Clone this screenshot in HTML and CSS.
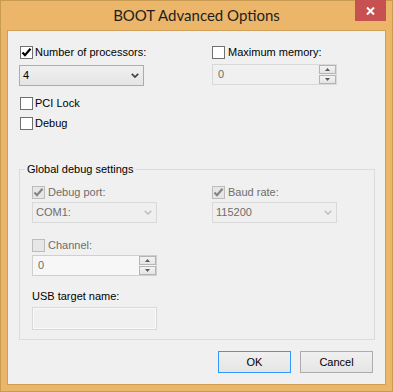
FILE: index.html
```html
<!DOCTYPE html>
<html lang="en">
<head>
    <meta charset="UTF-8">
    <meta name="viewport" content="width=device-width, initial-scale=1.0">
    <title>BOOT Advanced Options</title>
    <link rel="stylesheet" href="styles.css">
</head>
<body>
    <div class="window">
        <div class="titlebar">
            <span class="title">BOOT Advanced Options</span>
            <div class="close-btn">
                <svg width="9" height="8" viewBox="0 0 9 8"><path d="M1 0.5 L8 7.5 M8 0.5 L1 7.5" stroke="#fff" stroke-width="2" fill="none"/></svg>
            </div>
        </div>

        <div class="client">
            <div class="options">
                <div class="col">
                    <label class="check indent">
                        <span class="box"><svg width="11" height="11" viewBox="0 0 11 11"><path d="M1.5 5.5 L4 8.2 L9.5 1.8" stroke="#000" stroke-width="2.2" fill="none"/></svg></span>
                        Number of processors:
                    </label>
                    <div class="combo">
                        <span>4</span>
                        <svg width="8" height="5" viewBox="0 0 8 5"><path d="M0.8 0.8 L4 4 L7.2 0.8" stroke="#404040" stroke-width="1.7" fill="none"/></svg>
                    </div>
                    <label class="check indent gap-lg"><span class="box"></span>PCI Lock</label>
                    <label class="check indent gap-sm"><span class="box"></span>Debug</label>
                </div>
                <div class="col">
                    <label class="check"><span class="box"></span>Maximum memory:</label>
                    <div class="spinner disabled spin-top">
                        <span class="value">0</span>
                        <div class="spin-btns">
                            <span class="spin-btn"><svg width="5" height="3" viewBox="0 0 5 3"><path d="M2.5 0 L5 3 L0 3 Z" fill="#5a5a5a"/></svg></span>
                            <span class="spin-btn"><svg width="5" height="3" viewBox="0 0 5 3"><path d="M0 0 L5 0 L2.5 3 Z" fill="#5a5a5a"/></svg></span>
                        </div>
                    </div>
                </div>
            </div>

            <fieldset class="group">
                <legend>Global debug settings</legend>
                <div class="group-grid">
                    <div class="col">
                        <label class="check disabled">
                            <span class="box"><svg width="11" height="11" viewBox="0 0 11 11"><path d="M1.5 5.5 L4 8.2 L9.5 1.8" stroke="#858585" stroke-width="2.2" fill="none"/></svg></span>
                            Debug port:
                        </label>
                        <div class="combo disabled combo-near">
                            <span>COM1:</span>
                            <svg width="8" height="5" viewBox="0 0 8 5"><path d="M0.8 0.8 L4 4 L7.2 0.8" stroke="#c2c2c2" stroke-width="1.7" fill="none"/></svg>
                        </div>
                        <label class="check disabled gap-channel"><span class="box"></span>Channel:</label>
                        <div class="spinner field combo-near">
                            <span class="value">0</span>
                            <div class="spin-btns">
                                <span class="spin-btn"><svg width="5" height="3" viewBox="0 0 5 3"><path d="M2.5 0 L5 3 L0 3 Z" fill="#5a5a5a"/></svg></span>
                                <span class="spin-btn"><svg width="5" height="3" viewBox="0 0 5 3"><path d="M0 0 L5 0 L2.5 3 Z" fill="#5a5a5a"/></svg></span>
                            </div>
                        </div>
                        <div class="field-label">USB target name:</div>
                        <div class="textbox"></div>
                    </div>
                    <div class="col">
                        <label class="check disabled">
                            <span class="box"><svg width="11" height="11" viewBox="0 0 11 11"><path d="M1.5 5.5 L4 8.2 L9.5 1.8" stroke="#858585" stroke-width="2.2" fill="none"/></svg></span>
                            Baud rate:
                        </label>
                        <div class="combo disabled combo-near">
                            <span>115200</span>
                            <svg width="8" height="5" viewBox="0 0 8 5"><path d="M0.8 0.8 L4 4 L7.2 0.8" stroke="#c2c2c2" stroke-width="1.7" fill="none"/></svg>
                        </div>
                    </div>
                </div>
            </fieldset>

            <div class="buttons">
                <div class="btn default">OK</div>
                <div class="btn">Cancel</div>
            </div>
        </div>
    </div>
</body>
</html>
```

FILE: styles.css
```css
body {
    margin: 0;
    font-family: "Liberation Sans", Arial, sans-serif;
    font-size: 11px;
    line-height: 15px;
    color: #000;
}
.window {
    width: 393px;
    height: 392px;
    box-sizing: border-box;
    border: 1px solid #c89a52;
    background-color: #ebb66a;
    padding: 0 6px 6px;
    position: relative;
}
.titlebar {
    height: 29px;
    display: flex;
    justify-content: center;
    align-items: center;
}
.title {
    font-family: Lato, "Liberation Sans", sans-serif;
    font-size: 15px;
    color: #1e1e1e;
}
.close-btn {
    position: absolute;
    top: -1px;
    right: 6px;
    width: 31px;
    height: 21px;
    background-color: #c75050;
    display: flex;
    align-items: center;
    justify-content: center;
}
.client {
    height: 355px;
    box-sizing: border-box;
    border: 1px solid #cf9f58;
    background-color: #f0f0f0;
    padding: 14px 10px 0 11px;
}
.options {
    display: grid;
    grid-template-columns: 193px 1fr;
}
.check {
    display: flex;
    align-items: center;
    gap: 3px;
    height: 15px;
}
.check.indent {
    margin-left: 1px;
    gap: 2px;
}
.check.disabled {
    color: #6d6d6d;
}
.gap-lg {
    margin-top: 10px;
}
.gap-sm {
    margin-top: 5px;
}
.gap-channel {
    margin-top: 15px;
}
.box {
    width: 13px;
    height: 13px;
    box-sizing: border-box;
    border: 1px solid #707070;
    background-color: #fff;
    display: flex;
    align-items: center;
    justify-content: center;
    flex-shrink: 0;
}
.check.disabled .box {
    border-color: #bcbcbc;
    background-color: #e6e6e6;
}
.combo {
    margin-top: 5px;
    width: 125px;
    height: 21px;
    box-sizing: border-box;
    border: 1px solid #acacac;
    background: linear-gradient(#f0f0f0, #e5e5e5);
    display: flex;
    align-items: center;
    justify-content: space-between;
    padding: 0 4px 0 3px;
}
.combo.disabled {
    border-color: #d9d9d9;
    background: #efefef;
    color: #6d6d6d;
}
.combo-near {
    margin-top: 2px;
}
.spinner {
    width: 125px;
    height: 21px;
    box-sizing: border-box;
    border: 1px solid #d9d9d9;
    background-color: #f0f0f0;
    display: flex;
    color: #6d6d6d;
}
.spin-top {
    margin-top: 4px;
}
.spinner.field {
    border-color: #cfcfcf;
    background-color: #f7f7f7;
}
.spinner .value {
    flex: 1;
    align-self: center;
    padding-left: 5px;
}
.spin-btns {
    width: 17px;
    display: flex;
    flex-direction: column;
    gap: 1px;
}
.spin-btn {
    flex: 1;
    border: 1px solid #b4b4b4;
    background: linear-gradient(#f3f3f3, #e4e4e4);
    display: flex;
    align-items: center;
    justify-content: center;
}
.group {
    margin: 31px 0 0;
    padding: 8px 0 9px 12px;
    border: 1px solid #dcdcdc;
    min-width: 0;
}
.group legend {
    padding: 0 2px;
    margin-left: -7px;
}
.group-grid {
    display: grid;
    grid-template-columns: 180px 1fr;
}
.field-label {
    margin-top: 13px;
}
.textbox {
    margin-top: 3px;
    width: 125px;
    height: 23px;
    box-sizing: border-box;
    border: 1px solid #d9d9d9;
    box-shadow: inset 0 0 0 1px #f9f9f9;
    background-color: #f0f0f0;
}
.buttons {
    display: flex;
    justify-content: flex-end;
    gap: 9px;
    margin-top: 11px;
    padding-right: 2px;
}
.btn {
    width: 73px;
    height: 22px;
    box-sizing: border-box;
    border: 1px solid #acacac;
    background: linear-gradient(#f0f0f0, #e5e5e5);
    display: flex;
    align-items: center;
    justify-content: center;
}
.btn.default {
    border-color: #3399ff;
}
```
